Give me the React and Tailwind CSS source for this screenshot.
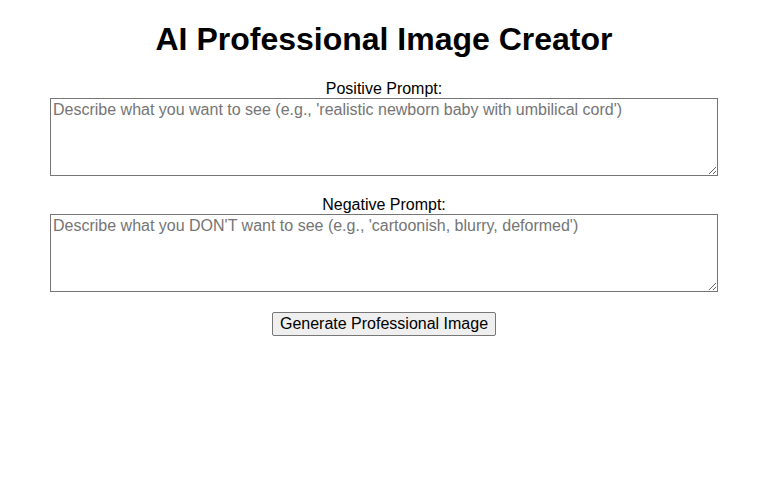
export default function App() {
  return (
    <div className="min-h-[480px] bg-white text-black font-['Liberation_Sans',Arial,sans-serif]">
      <h1 className="pt-[21px] text-center text-[32px] leading-[37px] font-bold">AI Professional Image Creator</h1>
      <div className="mt-[22px] flex flex-col items-center">
        <label className="text-[16px] leading-[18px]">Positive Prompt:</label>
        <textarea
          className="w-[668px] h-[78px] border border-[#767676] px-[2px] py-[2px] text-[16px] leading-[18px] placeholder:text-[#757575] outline-none"
          placeholder="Describe what you want to see (e.g., 'realistic newborn baby with umbilical cord')"
        />
        <label className="mt-[20px] text-[16px] leading-[18px]">Negative Prompt:</label>
        <textarea
          className="w-[668px] h-[78px] border border-[#767676] px-[2px] py-[2px] text-[16px] leading-[18px] placeholder:text-[#757575] outline-none"
          placeholder="Describe what you DON'T want to see (e.g., 'cartoonish, blurry, deformed')"
        />
        <button className="mt-[20px] h-[24px] px-[7px] bg-[#efefef] border border-[#767676] rounded-[2px] text-[16px] leading-[18px] text-black">
          Generate Professional Image
        </button>
      </div>
    </div>
  );
}
